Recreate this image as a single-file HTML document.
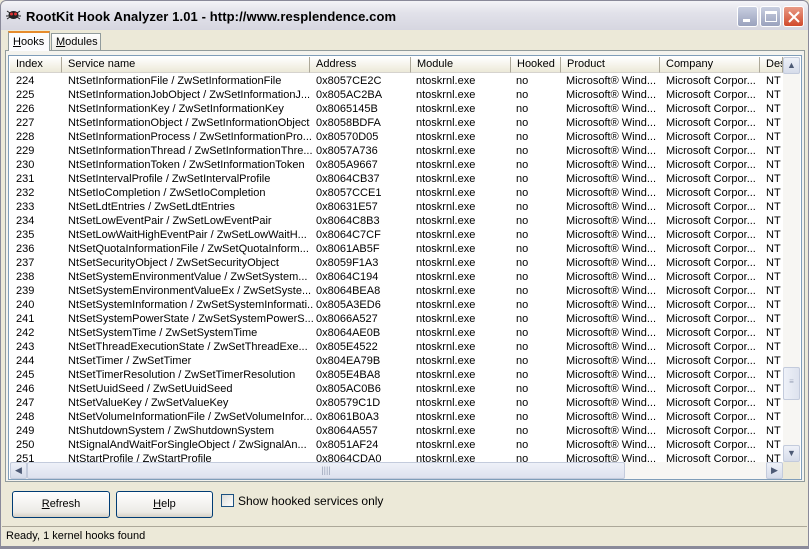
<!DOCTYPE html>
<html><head><meta charset="utf-8"><style>
*{box-sizing:border-box;margin:0;padding:0}
body{width:809px;height:549px;overflow:hidden;background:#ece9d8;font-family:"Liberation Sans",sans-serif;font-size:11px;color:#000;position:relative}
.abs{position:absolute}
#frame{left:0;top:0;width:809px;height:549px;border:1px solid #8a8a9a;border-radius:6px 6px 0 0;background:#ece9d8}
#title{left:1px;top:1px;width:807px;height:29px;background:linear-gradient(#f4f4f8,#e2e2ea 40%,#d6d6e0);border-radius:6px 6px 0 0}
#ttxt{left:26px;top:9px;font-size:13px;font-weight:bold;color:#000;letter-spacing:0.1px}
.tb{top:6px;width:21px;height:21px;border:1px solid #fff;border-radius:3px;background:linear-gradient(#c8cee0,#9aa2bd)}
#close{background:linear-gradient(#e89a86,#d14a2c)}
.hdr{top:57px;height:16px;background:linear-gradient(#fff,#ece9d8);border-right:1px solid #aca899;border-bottom:1px solid #d6d3ce;padding-left:6px;line-height:15px;white-space:nowrap;overflow:hidden}
#rows{left:10px;top:74px;width:773px;height:388px;overflow:hidden;background:#fff}
.r{height:14px;line-height:14px;white-space:nowrap;position:relative}
.r span{position:absolute;top:0;overflow:hidden}
.c1{left:6px;width:48px}.c2{left:58px;width:245px}.c3{left:306px;width:97px}.c4{left:406px;width:97px}.c5{left:506px;width:47px}.c6{left:556px;width:97px}.c7{left:656px;width:97px}.c8{left:756px;width:17px}
.btn{top:491px;height:27px;border:1px solid #003c74;border-radius:3px;background:linear-gradient(#fff,#ecebe6 80%,#d6d0c5);text-align:center;line-height:25px}
.sb{width:17px;height:17px;border:1px solid #c3cbdc;border-radius:2px;background:linear-gradient(#eef1f8,#d6dcea);text-align:center;font-size:9px;line-height:15px;color:#4d5a75}
</style></head><body>
<div id="frame" class="abs"></div>
<div id="title" class="abs"></div>
<div class="abs" style="left:6px;top:10px;width:15px;height:10px">
<svg width="15" height="10"><ellipse cx="7.5" cy="5" rx="5" ry="4" fill="#222"/><circle cx="5.5" cy="4" r="1.5" fill="#d33"/><circle cx="9.5" cy="4" r="1.5" fill="#d33"/><path d="M1 1l3 2M14 1l-3 2M0 6h3M12 6h3M1 9l3-2M14 9l-3-2" stroke="#222"/></svg></div>
<div id="ttxt" class="abs">RootKit Hook Analyzer 1.01 - http://www.resplendence.com</div>
<div class="abs tb" style="left:737px"><div class="abs" style="left:5px;top:12px;width:7px;height:3px;background:#fff"></div></div>
<div class="abs tb" style="left:760px"><div class="abs" style="left:4px;top:4px;width:12px;height:11px;border:1px solid #fff;border-top:3px solid #fff"></div></div>
<div class="abs tb" id="close" style="left:783px"><svg class="abs" style="left:4px;top:4px" width="12" height="12"><path d="M1 1L11 11M11 1L1 11" stroke="#fff" stroke-width="2"/></svg></div>
<div class="abs" style="left:5px;top:50px;width:800px;height:432px;border:1px solid #919b9c;background:#f4f3ee"></div>
<div class="abs" style="left:8px;top:31px;width:42px;height:20px;border:1px solid #919b9c;border-bottom:none;border-top:2px solid #e68b2c;background:#fcfcfe;padding:3px 0 0 4px"><u>H</u>ooks</div>
<div class="abs" style="left:51px;top:33px;width:50px;height:17px;border:1px solid #919b9c;border-bottom:none;background:linear-gradient(#fff,#ecebe5);padding:2px 0 0 4px"><u>M</u>odules</div>
<div class="abs" style="left:8px;top:55px;width:794px;height:425px;border:1px solid #7f9db9;background:#fff"></div>
<div class="abs hdr" style="left:10px;width:52px">Index</div>
<div class="abs hdr" style="left:62px;width:248px">Service name</div>
<div class="abs hdr" style="left:310px;width:101px">Address</div>
<div class="abs hdr" style="left:411px;width:100px">Module</div>
<div class="abs hdr" style="left:511px;width:50px">Hooked</div>
<div class="abs hdr" style="left:561px;width:99px">Product</div>
<div class="abs hdr" style="left:660px;width:100px">Company</div>
<div class="abs hdr" style="left:760px;width:23px">Des</div>
<div id="rows" class="abs">
<div class="r"><span class="c1">224</span><span class="c2">NtSetInformationFile / ZwSetInformationFile</span><span class="c3">0x8057CE2C</span><span class="c4">ntoskrnl.exe</span><span class="c5">no</span><span class="c6">Microsoft® Wind...</span><span class="c7">Microsoft Corpor...</span><span class="c8">NT</span></div>
<div class="r"><span class="c1">225</span><span class="c2">NtSetInformationJobObject / ZwSetInformationJ...</span><span class="c3">0x805AC2BA</span><span class="c4">ntoskrnl.exe</span><span class="c5">no</span><span class="c6">Microsoft® Wind...</span><span class="c7">Microsoft Corpor...</span><span class="c8">NT</span></div>
<div class="r"><span class="c1">226</span><span class="c2">NtSetInformationKey / ZwSetInformationKey</span><span class="c3">0x8065145B</span><span class="c4">ntoskrnl.exe</span><span class="c5">no</span><span class="c6">Microsoft® Wind...</span><span class="c7">Microsoft Corpor...</span><span class="c8">NT</span></div>
<div class="r"><span class="c1">227</span><span class="c2">NtSetInformationObject / ZwSetInformationObject</span><span class="c3">0x8058BDFA</span><span class="c4">ntoskrnl.exe</span><span class="c5">no</span><span class="c6">Microsoft® Wind...</span><span class="c7">Microsoft Corpor...</span><span class="c8">NT</span></div>
<div class="r"><span class="c1">228</span><span class="c2">NtSetInformationProcess / ZwSetInformationPro...</span><span class="c3">0x80570D05</span><span class="c4">ntoskrnl.exe</span><span class="c5">no</span><span class="c6">Microsoft® Wind...</span><span class="c7">Microsoft Corpor...</span><span class="c8">NT</span></div>
<div class="r"><span class="c1">229</span><span class="c2">NtSetInformationThread / ZwSetInformationThre...</span><span class="c3">0x8057A736</span><span class="c4">ntoskrnl.exe</span><span class="c5">no</span><span class="c6">Microsoft® Wind...</span><span class="c7">Microsoft Corpor...</span><span class="c8">NT</span></div>
<div class="r"><span class="c1">230</span><span class="c2">NtSetInformationToken / ZwSetInformationToken</span><span class="c3">0x805A9667</span><span class="c4">ntoskrnl.exe</span><span class="c5">no</span><span class="c6">Microsoft® Wind...</span><span class="c7">Microsoft Corpor...</span><span class="c8">NT</span></div>
<div class="r"><span class="c1">231</span><span class="c2">NtSetIntervalProfile / ZwSetIntervalProfile</span><span class="c3">0x8064CB37</span><span class="c4">ntoskrnl.exe</span><span class="c5">no</span><span class="c6">Microsoft® Wind...</span><span class="c7">Microsoft Corpor...</span><span class="c8">NT</span></div>
<div class="r"><span class="c1">232</span><span class="c2">NtSetIoCompletion / ZwSetIoCompletion</span><span class="c3">0x8057CCE1</span><span class="c4">ntoskrnl.exe</span><span class="c5">no</span><span class="c6">Microsoft® Wind...</span><span class="c7">Microsoft Corpor...</span><span class="c8">NT</span></div>
<div class="r"><span class="c1">233</span><span class="c2">NtSetLdtEntries / ZwSetLdtEntries</span><span class="c3">0x80631E57</span><span class="c4">ntoskrnl.exe</span><span class="c5">no</span><span class="c6">Microsoft® Wind...</span><span class="c7">Microsoft Corpor...</span><span class="c8">NT</span></div>
<div class="r"><span class="c1">234</span><span class="c2">NtSetLowEventPair / ZwSetLowEventPair</span><span class="c3">0x8064C8B3</span><span class="c4">ntoskrnl.exe</span><span class="c5">no</span><span class="c6">Microsoft® Wind...</span><span class="c7">Microsoft Corpor...</span><span class="c8">NT</span></div>
<div class="r"><span class="c1">235</span><span class="c2">NtSetLowWaitHighEventPair / ZwSetLowWaitH...</span><span class="c3">0x8064C7CF</span><span class="c4">ntoskrnl.exe</span><span class="c5">no</span><span class="c6">Microsoft® Wind...</span><span class="c7">Microsoft Corpor...</span><span class="c8">NT</span></div>
<div class="r"><span class="c1">236</span><span class="c2">NtSetQuotaInformationFile / ZwSetQuotaInform...</span><span class="c3">0x8061AB5F</span><span class="c4">ntoskrnl.exe</span><span class="c5">no</span><span class="c6">Microsoft® Wind...</span><span class="c7">Microsoft Corpor...</span><span class="c8">NT</span></div>
<div class="r"><span class="c1">237</span><span class="c2">NtSetSecurityObject / ZwSetSecurityObject</span><span class="c3">0x8059F1A3</span><span class="c4">ntoskrnl.exe</span><span class="c5">no</span><span class="c6">Microsoft® Wind...</span><span class="c7">Microsoft Corpor...</span><span class="c8">NT</span></div>
<div class="r"><span class="c1">238</span><span class="c2">NtSetSystemEnvironmentValue / ZwSetSystem...</span><span class="c3">0x8064C194</span><span class="c4">ntoskrnl.exe</span><span class="c5">no</span><span class="c6">Microsoft® Wind...</span><span class="c7">Microsoft Corpor...</span><span class="c8">NT</span></div>
<div class="r"><span class="c1">239</span><span class="c2">NtSetSystemEnvironmentValueEx / ZwSetSyste...</span><span class="c3">0x8064BEA8</span><span class="c4">ntoskrnl.exe</span><span class="c5">no</span><span class="c6">Microsoft® Wind...</span><span class="c7">Microsoft Corpor...</span><span class="c8">NT</span></div>
<div class="r"><span class="c1">240</span><span class="c2">NtSetSystemInformation / ZwSetSystemInformati...</span><span class="c3">0x805A3ED6</span><span class="c4">ntoskrnl.exe</span><span class="c5">no</span><span class="c6">Microsoft® Wind...</span><span class="c7">Microsoft Corpor...</span><span class="c8">NT</span></div>
<div class="r"><span class="c1">241</span><span class="c2">NtSetSystemPowerState / ZwSetSystemPowerS...</span><span class="c3">0x8066A527</span><span class="c4">ntoskrnl.exe</span><span class="c5">no</span><span class="c6">Microsoft® Wind...</span><span class="c7">Microsoft Corpor...</span><span class="c8">NT</span></div>
<div class="r"><span class="c1">242</span><span class="c2">NtSetSystemTime / ZwSetSystemTime</span><span class="c3">0x8064AE0B</span><span class="c4">ntoskrnl.exe</span><span class="c5">no</span><span class="c6">Microsoft® Wind...</span><span class="c7">Microsoft Corpor...</span><span class="c8">NT</span></div>
<div class="r"><span class="c1">243</span><span class="c2">NtSetThreadExecutionState / ZwSetThreadExe...</span><span class="c3">0x805E4522</span><span class="c4">ntoskrnl.exe</span><span class="c5">no</span><span class="c6">Microsoft® Wind...</span><span class="c7">Microsoft Corpor...</span><span class="c8">NT</span></div>
<div class="r"><span class="c1">244</span><span class="c2">NtSetTimer / ZwSetTimer</span><span class="c3">0x804EA79B</span><span class="c4">ntoskrnl.exe</span><span class="c5">no</span><span class="c6">Microsoft® Wind...</span><span class="c7">Microsoft Corpor...</span><span class="c8">NT</span></div>
<div class="r"><span class="c1">245</span><span class="c2">NtSetTimerResolution / ZwSetTimerResolution</span><span class="c3">0x805E4BA8</span><span class="c4">ntoskrnl.exe</span><span class="c5">no</span><span class="c6">Microsoft® Wind...</span><span class="c7">Microsoft Corpor...</span><span class="c8">NT</span></div>
<div class="r"><span class="c1">246</span><span class="c2">NtSetUuidSeed / ZwSetUuidSeed</span><span class="c3">0x805AC0B6</span><span class="c4">ntoskrnl.exe</span><span class="c5">no</span><span class="c6">Microsoft® Wind...</span><span class="c7">Microsoft Corpor...</span><span class="c8">NT</span></div>
<div class="r"><span class="c1">247</span><span class="c2">NtSetValueKey / ZwSetValueKey</span><span class="c3">0x80579C1D</span><span class="c4">ntoskrnl.exe</span><span class="c5">no</span><span class="c6">Microsoft® Wind...</span><span class="c7">Microsoft Corpor...</span><span class="c8">NT</span></div>
<div class="r"><span class="c1">248</span><span class="c2">NtSetVolumeInformationFile / ZwSetVolumeInfor...</span><span class="c3">0x8061B0A3</span><span class="c4">ntoskrnl.exe</span><span class="c5">no</span><span class="c6">Microsoft® Wind...</span><span class="c7">Microsoft Corpor...</span><span class="c8">NT</span></div>
<div class="r"><span class="c1">249</span><span class="c2">NtShutdownSystem / ZwShutdownSystem</span><span class="c3">0x8064A557</span><span class="c4">ntoskrnl.exe</span><span class="c5">no</span><span class="c6">Microsoft® Wind...</span><span class="c7">Microsoft Corpor...</span><span class="c8">NT</span></div>
<div class="r"><span class="c1">250</span><span class="c2">NtSignalAndWaitForSingleObject / ZwSignalAn...</span><span class="c3">0x8051AF24</span><span class="c4">ntoskrnl.exe</span><span class="c5">no</span><span class="c6">Microsoft® Wind...</span><span class="c7">Microsoft Corpor...</span><span class="c8">NT</span></div>
<div class="r"><span class="c1">251</span><span class="c2">NtStartProfile / ZwStartProfile</span><span class="c3">0x8064CDA0</span><span class="c4">ntoskrnl.exe</span><span class="c5">no</span><span class="c6">Microsoft® Wind...</span><span class="c7">Microsoft Corpor...</span><span class="c8">NT</span></div>
</div>
<div class="abs" style="left:783px;top:57px;width:17px;height:405px;background:#f7f6f3"></div>
<div class="abs sb" style="left:783px;top:57px">&#9650;</div>
<div class="abs" style="left:783px;top:367px;width:17px;height:33px;border:1px solid #c3cbdc;border-radius:2px;background:linear-gradient(90deg,#eef1f8,#dde2ee);text-align:center;line-height:28px;color:#9aa3b8;font-size:8px">&#8801;</div>
<div class="abs sb" style="left:783px;top:445px">&#9660;</div>
<div class="abs" style="left:10px;top:462px;width:773px;height:17px;background:#f7f6f3"></div>
<div class="abs sb" style="left:10px;top:462px">&#9664;</div>
<div class="abs" style="left:27px;top:462px;width:598px;height:17px;border:1px solid #c3cbdc;border-radius:2px;background:linear-gradient(#eef1f8,#dde2ee);text-align:center;line-height:14px;color:#9aa3b8;font-size:9px">||||</div>
<div class="abs sb" style="left:766px;top:462px">&#9654;</div>
<div class="abs" style="left:783px;top:462px;width:17px;height:17px;background:#ece9d8"></div>
<div class="abs btn" style="left:12px;width:98px"><u>R</u>efresh</div>
<div class="abs btn" style="left:116px;width:97px"><u>H</u>elp</div>
<div class="abs" style="left:221px;top:494px;width:13px;height:13px;border:1px solid #1c5180;background:linear-gradient(135deg,#dcdcd7,#fff)"></div>
<div class="abs" style="left:238px;top:494px;font-size:12px">Show hooked services only</div>
<div class="abs" style="left:2px;top:526px;width:805px;height:1px;background:#aca899"></div>
<div class="abs" style="left:6px;top:530px;font-size:11px">Ready, 1 kernel hooks found</div>
<div class="abs" style="left:0;top:546px;width:809px;height:3px;background:#8a8a9a"></div>
</body></html>
